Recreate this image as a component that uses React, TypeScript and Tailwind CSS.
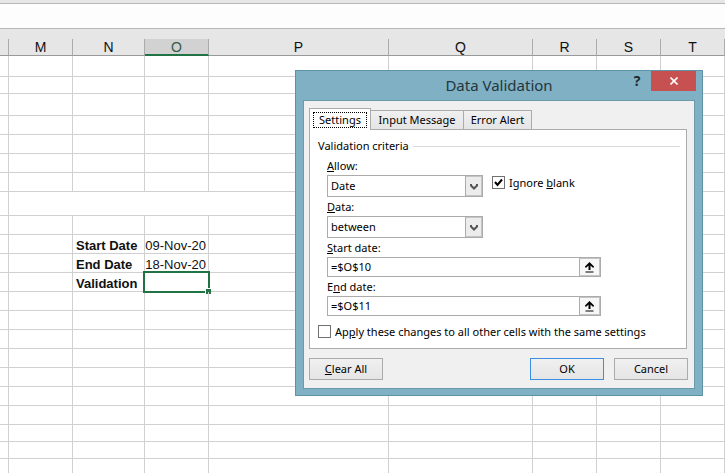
import type { ReactNode } from "react";

const columns = ["", "M", "N", "O", "P", "Q", "R", "S", "T", ""];

const columnWidths = [
  "w-[9px]",
  "w-16",
  "w-[72px]",
  "w-16",
  "w-[180px]",
  "w-36",
  "w-16",
  "w-16",
  "w-16",
  "",
];

type Row = {
  height: string;
  label?: string;
  value?: string;
  merged?: boolean;
  active?: boolean;
};

const rows: Row[] = [
  { height: "h-[21px]" },
  { height: "h-[17px]" },
  { height: "h-[22px]" },
  { height: "h-[19px]" },
  { height: "h-[19px]" },
  { height: "h-[19px]" },
  { height: "h-[19px]" },
  { height: "h-[24px]", merged: true },
  { height: "h-[19px]" },
  { height: "h-[19px]", label: "Start Date", value: "09-Nov-20" },
  { height: "h-[19px]", label: "End Date", value: "18-Nov-20" },
  { height: "h-[19px]", label: "Validation", active: true },
  { height: "h-[19px]" },
  { height: "h-[19px]" },
  { height: "h-[19px]" },
  { height: "h-[19px]" },
  { height: "h-[19px]" },
  { height: "h-[19px]" },
  { height: "h-[19px]" },
  { height: "h-[17px]" },
  { height: "h-[17px]" },
  { height: "h-[19px]" },
];

const cell = "border-r border-b border-[#d0d0d0] p-0";

function SheetRow({ row }: { row: Row }) {
  if (row.merged) {
    return (
      <tr className={row.height}>
        <td className={cell}></td>
        <td className={cell} colSpan={8}></td>
        <td className={cell}></td>
      </tr>
    );
  }

  return (
    <tr className={row.height}>
      <td className={cell}></td>
      <td className={cell}></td>
      <td className={`${cell} pt-1 pl-[3px] text-left font-bold whitespace-nowrap`}>{row.label}</td>
      <td className={`${cell} relative pt-1 pr-0.5 text-right whitespace-nowrap`}>
        {row.value}
        {row.active && (
          <div className="absolute -inset-0.5 border-2 border-[#217346]">
            <span className="absolute -right-[3px] -bottom-[3px] h-1.5 w-1.5 border-t border-l border-white bg-[#217346]"></span>
          </div>
        )}
      </td>
      <td className={cell}></td>
      <td className={cell}></td>
      <td className={cell}></td>
      <td className={cell}></td>
      <td className={cell}></td>
      <td className={cell}></td>
    </tr>
  );
}

function Spreadsheet() {
  return (
    <div className="overflow-hidden">
      <div className="h-1 border-b border-[#b8b8b8] bg-[#e6e6e6]"></div>
      <div className="h-[25px] border-b border-[#b8b8b8] bg-[#fdfdfd]"></div>
      <div className="h-2.5 bg-[#e6e6e6]"></div>
      <table className="w-full table-fixed border-separate border-spacing-0 text-[13px] leading-[14px]">
        <colgroup>
          {columnWidths.map((width, i) => (
            <col key={i} className={width} />
          ))}
        </colgroup>
        <thead>
          <tr className="h-[17px]">
            {columns.map((name, i) => (
              <th
                key={i}
                className={
                  name === "O"
                    ? "border-r border-b-2 border-r-[#ababab] border-b-[#217346] bg-[#d2d2d2] p-0 text-[14px] font-normal text-[#2f5d4a]"
                    : "border-r border-b border-r-[#ababab] border-b-[#999999] bg-[#e6e6e6] p-0 text-[14px] font-normal"
                }
              >
                {name}
              </th>
            ))}
          </tr>
        </thead>
        <tbody>
          {rows.map((row, i) => (
            <SheetRow key={i} row={row} />
          ))}
        </tbody>
      </table>
    </div>
  );
}

function DropDown({ id, value, options, label }: { id: string; value: string; options: string[]; label: ReactNode }) {
  return (
    <div className="w-[156px]">
      <label htmlFor={id} className="block h-[18px] leading-[18px]">
        {label}
      </label>
      <div className="relative">
        <select
          id={id}
          defaultValue={value}
          className="block h-[22px] w-full appearance-none border border-[#ababab] bg-white pl-[3px] leading-4 outline-none"
        >
          {options.map((option) => (
            <option key={option}>{option}</option>
          ))}
        </select>
        <span className="pointer-events-none absolute inset-y-0 right-0 flex w-[18px] border border-[#ababab]">
          <span className="flex flex-1 items-center justify-center border border-l-0 border-[#c4c4c4] bg-[#ececec]">
            <svg width="8" height="7" viewBox="0 0 8 7" fill="none" stroke="#555555" strokeWidth="2">
              <path d="M1 1v1.5L4 5.5l3-3V1" />
            </svg>
          </span>
        </span>
      </div>
    </div>
  );
}

function RangeInput({ id, value, label }: { id: string; value: string; label: ReactNode }) {
  return (
    <div className="w-[274px]">
      <label htmlFor={id} className="block h-[19px] leading-5">
        {label}
      </label>
      <div className="flex h-5 border border-[#ababab]">
        <input id={id} defaultValue={value} className="min-w-0 flex-1 bg-white pl-[3px] outline-none" />
        <button
          type="button"
          aria-label="Collapse dialog"
          className="flex w-[21px] items-center justify-center border border-[#c4c4c4] border-l-[#ababab] bg-[#f7f7f7]"
        >
          <svg width="9" height="11" viewBox="0 0 9 11" fill="black">
            <path d="M4.5 0L9 4.5v1H7.5L5.5 3.6V8h-2V3.6L1.5 5.5H0v-1zM0.5 9.5h8v1h-8z" />
          </svg>
        </button>
      </div>
    </div>
  );
}

function DialogButton({ children, primary }: { children: ReactNode; primary?: boolean }) {
  return (
    <button
      type="button"
      className={`h-[22px] w-[74px] border bg-gradient-to-b from-[#f0f0f0] to-[#e5e5e5] ${
        primary ? "border-[#3c8fe0]" : "border-[#ababab]"
      }`}
    >
      {children}
    </button>
  );
}

function ValidationDialog() {
  return (
    <div
      role="dialog"
      aria-labelledby="dialog-title"
      className="absolute top-[70px] left-[295px] w-[408px] border border-[#5e92a5] bg-[#7fb0c3] px-[7px] pb-1.5 font-['Noto_Sans','Open_Sans',sans-serif] text-[11px] leading-4 text-black"
    >
      <div className="relative flex h-[29px] items-center justify-center">
        <h1 id="dialog-title" className="pb-0.5 text-[15px] leading-5 text-[#24363e]">
          Data Validation
        </h1>
        <div className="absolute top-0 -right-px flex">
          <button type="button" aria-label="Help" className="h-5 w-7 text-sm font-bold text-[#1c2b31]">
            ?
          </button>
          <button type="button" aria-label="Close" className="flex h-5 w-[45px] items-center justify-center bg-[#c75050]">
            <svg width="8" height="8" viewBox="0 0 8 8" stroke="white" strokeWidth="1.6">
              <path d="M0.5 0.5l7 7M7.5 0.5l-7 7" />
            </svg>
          </button>
        </div>
      </div>

      <div className="border border-[#6b9aab] bg-[#f0f0f0] px-[5px] pt-[7px] pb-2">
        {/* Tabs */}
        <div role="tablist" className="flex items-end">
          <button
            type="button"
            role="tab"
            aria-selected="true"
            className="relative z-10 -mb-px h-[22px] w-[62px] border border-b-0 border-[#ababab] bg-white p-[3px] pb-0.5"
          >
            <span className="block border border-dotted border-black leading-[14px]">Settings</span>
          </button>
          <button
            type="button"
            role="tab"
            className="h-[19px] w-[93px] border border-b-0 border-l-0 border-[#ababab] bg-gradient-to-b from-[#f0f0f0] to-[#e5e5e5]"
          >
            Input Message
          </button>
          <button
            type="button"
            role="tab"
            className="h-[19px] w-[68px] border border-b-0 border-l-0 border-[#ababab] bg-gradient-to-b from-[#f0f0f0] to-[#e5e5e5]"
          >
            Error Alert
          </button>
        </div>

        {/* Settings panel */}
        <div className="mr-0.5 border border-[#ababab] bg-white py-2 pr-1.5 pl-2">
          <div className="flex items-center gap-1">
            <h2>Validation criteria</h2>
            <div className="h-px flex-1 bg-[#dcdcdc]"></div>
          </div>
          <div className="mt-[3px] flex items-start gap-[9px] pl-[9px]">
            <div className="flex flex-col gap-px">
              <DropDown
                id="allow"
                value="Date"
                options={["Any value", "Whole number", "Decimal", "List", "Date", "Time"]}
                label={<><u>A</u>llow:</>}
              />
              <DropDown
                id="data"
                value="between"
                options={["between", "not between", "equal to"]}
                label={<><u>D</u>ata:</>}
              />
            </div>
            <label className="mt-[17px] flex items-center gap-1 leading-[17px]">
              <input
                type="checkbox"
                defaultChecked
                className="peer h-[13px] w-[13px] appearance-none border border-[#707070] bg-white"
              />
              <svg className="-ml-[17px] hidden peer-checked:block" width="13" height="13" viewBox="0 0 13 13" fill="none" stroke="black" strokeWidth="2">
                <path d="M3 6l2.5 3L10 3.5" />
              </svg>
              <span>
                Ignore <u>b</u>lank
              </span>
            </label>
          </div>
          <div className="flex flex-col pl-[9px]">
            <RangeInput id="start" value="=$O$10" label={<><u>S</u>tart date:</>} />
            <RangeInput id="end" value="=$O$11" label={<>E<u>n</u>d date:</>} />
          </div>
          <label className="mt-[7px] flex items-center gap-1 leading-[17px]">
            <input type="checkbox" className="h-[13px] w-[13px] appearance-none border border-[#707070] bg-white" />
            <span>
              Ap<u>p</u>ly these changes to all other cells with the same settings
            </span>
          </label>
        </div>

        {/* Footer */}
        <div className="mt-[9px] flex pr-px">
          <DialogButton>
            <u>C</u>lear All
          </DialogButton>
          <div className="ml-auto flex gap-2.5">
            <DialogButton primary>OK</DialogButton>
            <DialogButton>Cancel</DialogButton>
          </div>
        </div>
      </div>
    </div>
  );
}

export default function App() {
  return (
    <main className="relative h-screen overflow-hidden bg-white font-['Liberation_Sans',Arial,sans-serif] text-[#111111]">
      <Spreadsheet />
      <ValidationDialog />
    </main>
  );
}
